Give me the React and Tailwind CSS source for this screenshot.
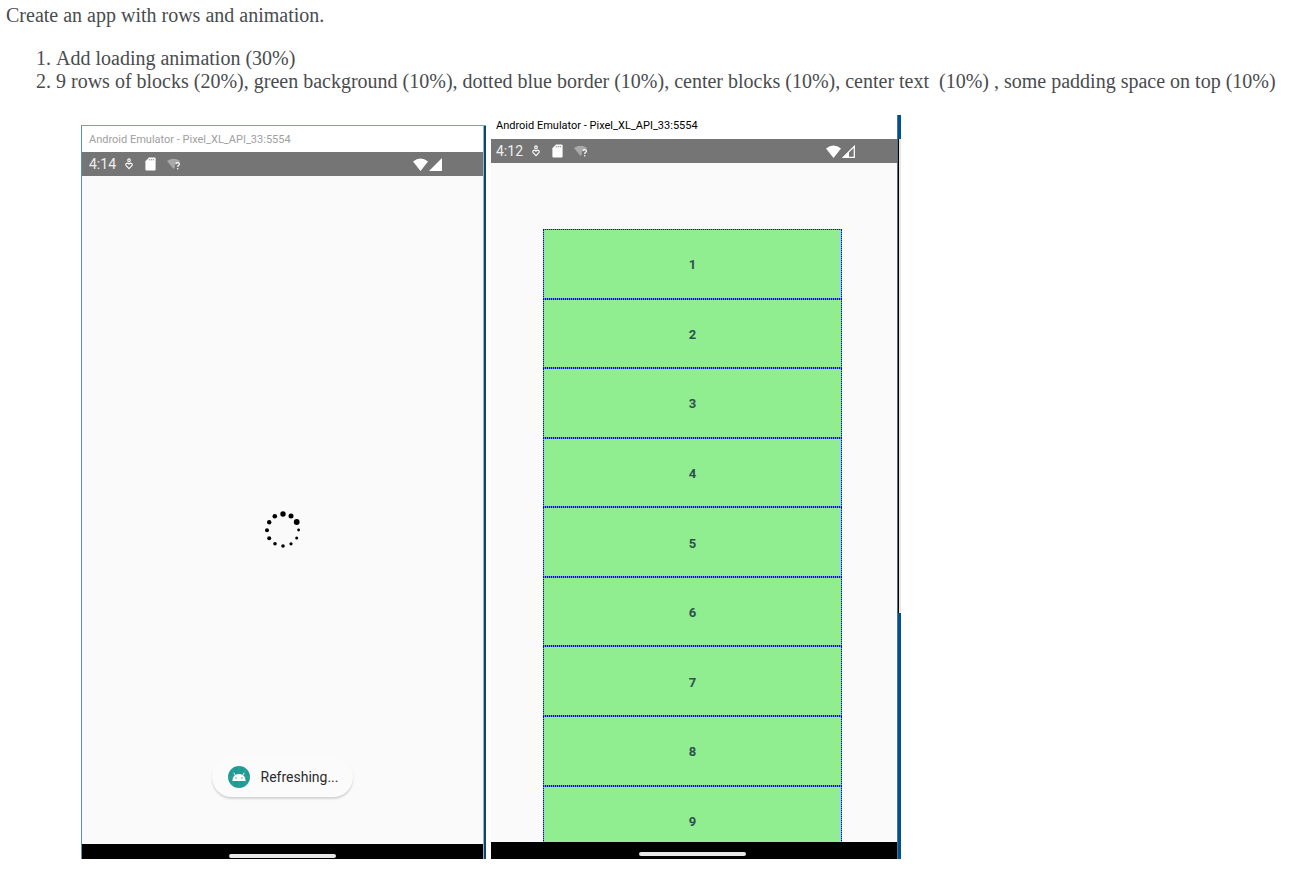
import React from "react";

const blocks = [1, 2, 3, 4, 5, 6, 7, 8, 9];

const dots = [
  [20, 4, 2.7],
  [28, 6, 2.5],
  [33.7, 12, 2.9],
  [35.6, 20, 1.4],
  [33.7, 28, 1.5],
  [28, 33.8, 1.6],
  [20, 36, 1.8],
  [12, 33.8, 1.8],
  [6.2, 28.3, 2],
  [4, 20.3, 2],
  [6.2, 12.3, 2.2],
  [11.8, 6.3, 2.3],
];

function Spinner() {
  return (
    <svg className="size-10" viewBox="0 0 40 40" role="img" aria-label="Loading">
      {dots.map(([x, y, r]) => (
        <circle key={`${x}-${y}`} cx={x} cy={y} r={r} fill="#000" />
      ))}
    </svg>
  );
}

function DebugIcon() {
  return (
    <svg className="h-3 w-2" viewBox="0 0 8 12" fill="none" stroke="#fff" strokeWidth="1.1" aria-hidden="true">
      <circle cx="4" cy="2.2" r="1.3" />
      <path d="M4 10.6 1.1 7.7C-.2 6 2.4 3.9 4 6.1 5.6 3.9 8.2 6 6.9 7.7Z" />
    </svg>
  );
}

function CardIcon() {
  return (
    <svg className="h-[14px] w-[11px]" viewBox="0 0 11 14" aria-hidden="true">
      <path d="M4 .6h5.6q1 0 1 1v10.8q0 1-1 1H1.4q-1 0-1-1V4.2Z" fill="#fff" />
      <path d="M4.3 2v1.4M6.3 2v1.4M8.3 2v1.4" stroke="#8a8a8a" strokeWidth="1" />
    </svg>
  );
}

function WifiUnknownIcon() {
  return (
    <svg className="h-3 w-[14px]" viewBox="0 0 14 12" aria-hidden="true">
      <path d="M0 3Q6.5-1.6 13 3L11.6 4.8Q8 4 7.9 7.5L7.6 9.8 6.5 11Z" fill="#a9a9a9" />
      <path d="M8.9 6.1Q9 4.6 10.7 4.6 12.5 4.7 12.4 6.1 12.3 7 11.4 7.5 10.7 8 10.7 8.9" fill="none" stroke="#fff" strokeWidth="1.2" />
      <circle cx="10.7" cy="10.7" r=".8" fill="#fff" />
    </svg>
  );
}

function WifiIcon() {
  return (
    <svg className="h-[13px] w-[15px]" viewBox="0 0 15 13" aria-hidden="true">
      <path d="M0 3.4Q7.5-2.6 15 3.4L7.5 13Z" fill="#fff" />
    </svg>
  );
}

function SignalIcon({ hollow }) {
  return (
    <svg className="size-[13px]" viewBox="0 0 13 13" aria-hidden="true">
      {hollow ? (
        <>
          <path d="M12.3 1.4V12.3H1.3Z" fill="none" stroke="#fff" strokeWidth="1.3" />
          <path d="M7 6.5V12.5H1Z" fill="#fff" />
        </>
      ) : (
        <path d="M13 0V13H0Z" fill="#fff" />
      )}
    </svg>
  );
}

function AndroidIcon() {
  return (
    <svg className="size-[22px]" viewBox="0 0 22 22" aria-hidden="true">
      <circle cx="11" cy="11" r="11" fill="#219a94" />
      <path d="M11 0V22M0 11H22M5 2V20M17 2V20" stroke="#48aca7" strokeWidth=".5" />
      <path d="M7.4 9.6 5.9 6.8M14.6 9.6 16.1 6.8" stroke="#fff" strokeWidth=".9" fill="none" />
      <path d="M4.4 14.9Q4.8 7.9 11 7.9T17.6 14.9Z" fill="#fff" />
      <circle cx="8" cy="12" r=".7" fill="#219a94" />
      <circle cx="14" cy="12" r=".7" fill="#219a94" />
    </svg>
  );
}

function StatusBar({ time, hollow, className }) {
  return (
    <div className={`flex h-6 items-center justify-between bg-[#757575] ${className}`}>
      <div className="flex items-center">
        <span className="w-9 text-sm text-[#eeeeee]">{time}</span>
        <DebugIcon />
        <span className="ml-3 flex items-center gap-[11px]">
          <CardIcon />
          <WifiUnknownIcon />
        </span>
      </div>
      <div className="flex items-center gap-px">
        <WifiIcon />
        <SignalIcon hollow={hollow} />
      </div>
    </div>
  );
}

function HomeBar({ className }) {
  return (
    <div className={`flex justify-center bg-black ${className}`}>
      <div className="h-1 w-[107px] rounded-sm bg-[#e8e8e8]" />
    </div>
  );
}

function LoadingPhone() {
  return (
    <section className="flex w-full max-w-[405px] border-t border-t-[#6aa9c4]">
      <div className="flex min-w-0 grow flex-col border-l border-l-[#5b8fc0]">
        <h2 className="h-[26px] pl-[7px] text-[11px] leading-7 text-[#a0a0a0]">
          Android Emulator - Pixel_XL_API_33:5554
        </h2>
        <StatusBar time="4:14" className="pr-[41px] pl-[7px]" />
        <div className="flex flex-col items-center bg-[#fafafa] pt-[334px] pb-[47px]">
          <Spinner />
          <div className="mt-[207px] flex h-10 items-center gap-[11px] rounded-full bg-[#fbfbfc] pr-[15px] pl-4 text-[#2b2b2b] shadow-[0_2px_2px_#d4d4d4]">
            <AndroidIcon />
            <span className="text-sm">Refreshing...</span>
          </div>
        </div>
        <HomeBar className="h-[15px] pt-[10px]" />
      </div>
      <div className="w-[3px] border-l border-l-[#8fb3c8] bg-[#12456b]" />
    </section>
  );
}

function BlocksPhone() {
  return (
    <section className="flex w-full max-w-[410px]">
      <div className="flex min-w-0 grow flex-col">
        <h2 className="h-6 pl-[5px] text-[11px] leading-[22px] text-black">
          Android Emulator - Pixel_XL_API_33:5554
        </h2>
        <StatusBar time="4:12" hollow className="pr-[42px] pl-[5px]" />
        <div className="flex h-[679px] justify-center overflow-hidden bg-[#fafafa] pt-[66px] pr-[3px]">
          <ol className="flex h-[626px] w-[299px] shrink-0 flex-col bg-[#6c9ce0]">
            {blocks.map((n) => (
              <li
                key={n}
                className="flex flex-1 items-center justify-center border border-dotted border-[#0000ff] bg-[#90ee90] bg-clip-padding pt-0.5 text-[13px] font-bold text-[#2f4f4f]"
              >
                {n}
              </li>
            ))}
          </ol>
        </div>
        <HomeBar className="h-[17px] pt-[10px] pr-[3px]" />
      </div>
      <div className="flex w-1 flex-col border-l border-l-[#50738c]">
        <div className="h-6 bg-[#00508f]" />
        <div className="h-[474px] border-l border-l-black bg-[#eae6e3]" />
        <div className="grow bg-[#00508f]" />
      </div>
    </section>
  );
}

export default function App() {
  return (
    <main className="min-h-screen bg-white pt-1 pb-6 font-['Liberation_Serif',serif] text-xl leading-[23px] text-[#494c4e]">
      <p className="pl-[6px]">Create an app with rows and animation.</p>
      <ol className="mt-5 list-decimal pl-14">
        <li>Add loading animation (30%)</li>
        <li>
          9 rows of blocks (20%), green background (10%), dotted blue border (10%), center blocks (10%), center
          text&nbsp; (10%) , some padding space on top (10%)
        </li>
      </ol>
      <div className="mt-[22px] flex items-end gap-[5px] pl-[81px] font-['Roboto',sans-serif]">
        <LoadingPhone />
        <BlocksPhone />
      </div>
    </main>
  );
}
